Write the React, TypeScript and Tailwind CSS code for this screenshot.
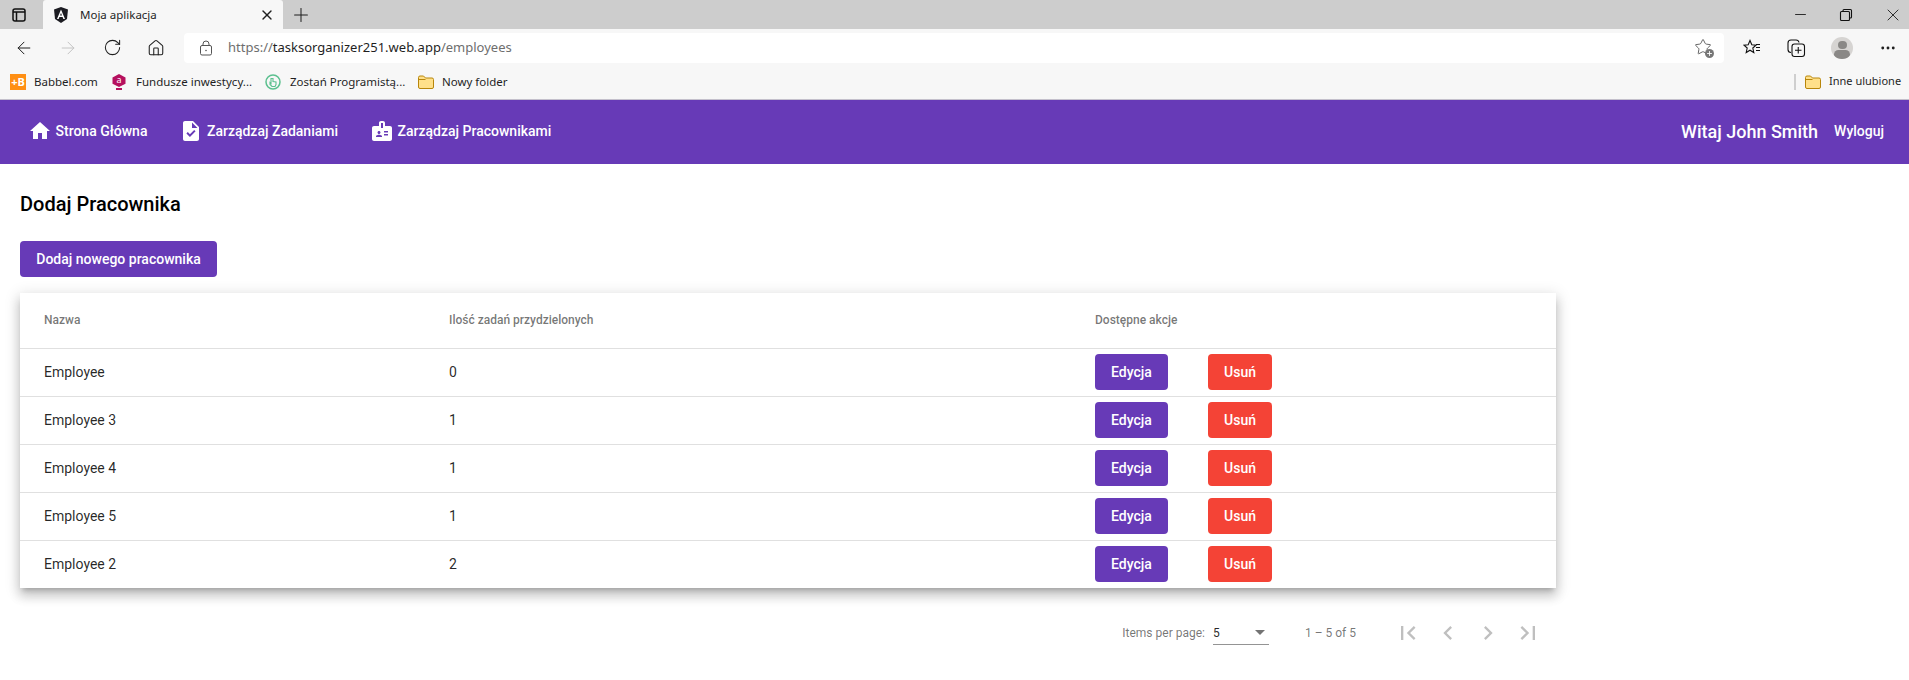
import React from 'react';
import { Plus, X, Minus, ArrowLeft, ArrowRight, RotateCw, Home, Star, MoreHorizontal } from 'lucide-react';

const employees = [
  { name: 'Employee', tasks: 0 },
  { name: 'Employee 3', tasks: 1 },
  { name: 'Employee 4', tasks: 1 },
  { name: 'Employee 5', tasks: 1 },
  { name: 'Employee 2', tasks: 2 },
];

const FolderIcon = () => (
  <svg width="16" height="16" viewBox="0 0 16 16" className="shrink-0">
    <path d="M0.5 3.5a1.5 1.5 0 0 1 1.5-1.5h3.5l2 2H14a1.5 1.5 0 0 1 1.5 1.5v7.5a1.5 1.5 0 0 1-1.5 1.5H2a1.5 1.5 0 0 1-1.5-1.5z" fill="#ffe08a" stroke="#b8860b" />
    <path d="M0.5 5.5H7.5" stroke="#b8860b" fill="none" />
  </svg>
);

const MatIcon = ({ d, className }: { d: string; className?: string }) => (
  <svg viewBox="0 0 24 24" fill="currentColor" className={className}>
    <path d={d} />
  </svg>
);

const BrowserChrome = () => (
  <div className="font-['Noto_Sans',sans-serif] text-[#1f1f1f]">
    {/* tab strip */}
    <div className="h-[29px] bg-[#cdcdcd] flex">
      <div className="w-[43px] flex items-center justify-center pr-[6px]">
        <svg width="14" height="14" viewBox="0 0 14 14" fill="none" stroke="#111" strokeWidth="1.5">
          <rect x="1" y="1" width="12" height="12" rx="2" />
          <path d="M1 4h12M4.5 4v9" />
        </svg>
      </div>
      <div className="w-[240px] bg-[#f7f7f7] rounded-t-[3px] flex items-center">
        <svg width="16" height="16" viewBox="0 0 16 16" className="ml-[10px]">
          <path d="M8 0L1 2.5l1 9.6L8 16l6-3.900 1-9.600z" fill="#1c1c22" />
          <path d="M8 2.400L4 12h1.600l.8-2.100h3.200l.8 2.100H12zM7 8.500L8 6l1 2.500z" fill="#fff" />
        </svg>
        <span className="ml-[11px] text-[11.5px] leading-none">Moja aplikacja</span>
        <X className="ml-auto mr-[8px] w-[16px] h-[16px]" strokeWidth={2} />
      </div>
      <div className="w-[36px] flex items-center justify-center">
        <Plus className="w-[22px] h-[22px]" strokeWidth={1.1} />
      </div>
      <div className="ml-auto flex items-center gap-[30px] pr-[6px]">
        <Minus className="w-[17px] h-[17px]" strokeWidth={1.3} />
        <svg width="14" height="14" viewBox="0 0 14 14" fill="none" stroke="#111" strokeWidth="1.1">
          <rect x="1.500" y="3.500" width="9" height="9" rx="1" />
          <path d="M4 3.500V2.500a1 1 0 0 1 1-1h6.500a1 1 0 0 1 1 1v6.500a1 1 0 0 1-1 1h-1" />
        </svg>
        <X className="w-[20px] h-[20px]" strokeWidth={1.1} />
      </div>
    </div>

    {/* toolbar */}
    <div className="h-[37px] bg-[#f7f7f7] flex items-center pl-[2px]">
      <div className="w-[44px] flex justify-center"><ArrowLeft className="w-[20px] h-[20px]" strokeWidth={1.2} /></div>
      <div className="w-[44px] flex justify-center"><ArrowRight className="w-[20px] h-[20px] text-[#c4c4c4]" strokeWidth={1.2} /></div>
      <div className="w-[44px] flex justify-center"><RotateCw className="w-[19px] h-[19px]" strokeWidth={1.3} /></div>
      <div className="w-[44px] flex justify-center"><Home className="w-[18px] h-[18px]" strokeWidth={1.4} /></div>
      <div className="ml-[6px] w-[1540px] h-[30px] bg-white rounded-[4px] flex items-center">
        <svg width="14" height="16" viewBox="0 0 14 16" fill="none" stroke="#555" strokeWidth="1" className="ml-[15px]">
          <rect x="1.500" y="5.500" width="11" height="9.500" rx="1.500" />
          <path d="M4 5.500V4a3 3 0 0 1 6 0v1.500" />
          <circle cx="7" cy="10.500" r="0.800" fill="#555" stroke="none" />
        </svg>
        <span className="ml-[15px] text-[13px] leading-none text-[#6e6e6e]">
          https://<span className="text-[#1f1f1f]">tasksorganizer251.web.app</span>/employees
        </span>
        <div className="ml-auto mr-[10px] relative w-[20px] h-[20px]">
          <Star className="w-[18px] h-[18px] text-[#555]" strokeWidth={1.2} />
          <span className="absolute right-0 bottom-0 w-[9px] h-[9px] rounded-full bg-[#777] flex items-center justify-center">
            <Plus className="w-[7px] h-[7px] text-white" strokeWidth={3} />
          </span>
        </div>
      </div>
      <div className="ml-[6px] w-[44px] flex justify-center">
        <svg width="18" height="18" viewBox="0 0 18 18" fill="none" stroke="#111" strokeWidth="1.1">
          <path d="M7 1.500l1.800 4.200 4.200.4-3.200 2.900 1 4.500L7 11.200 3.200 13.500l1-4.500L1 6.100l4.200-.4z" />
          <path d="M13 5.500h4M13 8.500h4M13 11.500h4" />
        </svg>
      </div>
      <div className="w-[44px] flex justify-center">
        <svg width="20" height="20" viewBox="0 0 20 20" fill="none" stroke="#111" strokeWidth="1.1">
          <path d="M5 14.500a3 3 0 0 1-3-3V5a3 3 0 0 1 3-3h5a3 3 0 0 1 3 2.500" />
          <rect x="6" y="6" width="12.500" height="12.500" rx="2.500" />
          <path d="M12.250 9v6.500M9 12.250h6.500" />
        </svg>
      </div>
      <div className="ml-[2px] w-[44px] flex justify-center">
        <div className="w-[22px] h-[22px] rounded-full bg-[#d6d4d2] flex flex-col items-center overflow-hidden">
          <div className="mt-[4px] w-[9px] h-[9px] rounded-full bg-[#8a8886]" />
          <div className="mt-[1px] w-[16px] h-[10px] rounded-full bg-[#8a8886]" />
        </div>
      </div>
      <div className="ml-[2px] w-[43px] flex justify-center"><MoreHorizontal className="w-[18px] h-[18px]" strokeWidth={1.8} /></div>
    </div>

    {/* bookmarks */}
    <div className="h-[34px] pb-[2px] bg-[#f7f7f7] border-b border-[#c4c0cc] flex items-center pl-[10px] text-[11.5px]">
      <span className="w-[16px] h-[16px] bg-[#ff8f14] text-white font-bold text-[11px] leading-[16px] text-center shrink-0">+B</span>
      <span className="ml-[8px] w-[78px]">Babbel.com</span>
      <svg width="14" height="16" viewBox="0 0 14 16" className="shrink-0">
        <path d="M7 0l6.500 3.400v6.400L7 13 .5 9.800V3.400z" fill="#b5105e" />
        <text x="7" y="9" textAnchor="middle" fontSize="9" fill="#fff">a</text>
        <rect x="4" y="14" width="6" height="2" fill="#b5105e" />
      </svg>
      <span className="ml-[10px] w-[129px]">Fundusze inwestycy...</span>
      <svg width="16" height="16" viewBox="0 0 16 16" fill="none" className="shrink-0">
        <circle cx="8" cy="8" r="7" stroke="#5cc08f" strokeWidth="1.500" />
        <path d="M6 4.500v5l-1-1v2l2 2h3l1-2v-2.500l-3-.5v-3z" stroke="#5cc08f" strokeWidth="1.100" />
      </svg>
      <span className="ml-[9px] w-[128px]">Zostań Programistą...</span>
      <FolderIcon />
      <span className="ml-[8px]">Nowy folder</span>
      <div className="ml-auto w-[2px] h-[16px] bg-[#cfcfcf]" />
      <div className="ml-[9px]"><FolderIcon /></div>
      <span className="ml-[8px] mr-[7px] w-[73px] whitespace-nowrap text-[11px]">Inne ulubione</span>
    </div>
  </div>
);

const navItems = [
  { label: 'Strona Główna', icon: 'M10 20v-6h4v6h5v-8h3L12 3 2 12h3v8z' },
  { label: 'Zarządzaj Zadaniami', icon: 'M14 2H6c-1.100 0-2 .9-2 2v16c0 1.100.9 2 2 2h12c1.100 0 2-.9 2-2V8l-6-6zm-3.060 16L7.400 14.460l1.410-1.410 2.120 2.120 4.240-4.240 1.410 1.410L10.940 18zM13 9V3.500L18.500 9H13z' },
  { label: 'Zarządzaj Pracownikami', icon: 'M20 7h-5V4c0-1.100-.9-2-2-2h-2c-1.100 0-2 .9-2 2v3H4c-1.100 0-2 .9-2 2v11c0 1.100.9 2 2 2h16c1.100 0 2-.9 2-2V9c0-1.100-.9-2-2-2zM9 12c.83 0 1.500.67 1.500 1.500S9.830 15 9 15s-1.500-.67-1.500-1.500S8.170 12 9 12zm3 6H6v-.75c0-1 2-1.500 3-1.500s3 .5 3 1.500V18zm1-9h-2V4h2v5zm5 7.500h-4V15h4v1.500zm0-3h-4V12h4v1.500z' },
];

const AppToolbar = () => (
  <div className="h-[64px] bg-[#673ab7] text-white flex items-center pl-[12px] pr-[9px] pb-[2px]">
    {navItems.map((item) => (
      <button key={item.label} className="px-4 h-9 flex items-center gap-[3.5px] text-[14px] font-medium">
        <MatIcon d={item.icon} className="w-6 h-6" />
        {item.label}
      </button>
    ))}
    <span className="ml-auto text-[18px] font-medium">Witaj John Smith</span>
    <button className="px-4 h-9 text-[14px] font-medium">Wyloguj</button>
  </div>
);

const EmployeesTable = () => (
  <div className="mt-4 bg-white shadow-[0_5px_5px_-3px_rgba(0,0,0,0.2),0_8px_10px_1px_rgba(0,0,0,0.14),0_3px_14px_2px_rgba(0,0,0,0.12)]">
    <table className="w-full table-fixed">
      <thead>
        <tr className="h-[55px] border-b border-[#e0e0e0] text-[12px] font-medium text-black/55 text-left">
          <th className="w-[429px] pl-6 font-medium">Nazwa</th>
          <th className="w-[646px] font-medium">Ilość zadań przydzielonych</th>
          <th className="font-medium">Dostępne akcje</th>
        </tr>
      </thead>
      <tbody>
        {employees.map((emp, i) => (
          <tr key={emp.name} className={`h-[48px] text-[14px] text-black/85 ${i < employees.length - 1 ? 'border-b border-[#e0e0e0]' : ''}`}>
            <td className="pl-6">{emp.name}</td>
            <td>{emp.tasks}</td>
            <td>
              <div className="flex items-center gap-[40px]">
                <button className="w-[73px] h-9 rounded-[4px] bg-[#673ab7] text-white font-medium">Edycja</button>
                <button className="w-[64px] h-9 rounded-[4px] bg-[#f44336] text-white font-medium">Usuń</button>
              </div>
            </td>
          </tr>
        ))}
      </tbody>
    </table>
  </div>
);

const pagerIcons = [
  'M18.410 16.590L13.820 12l4.590-4.590L17 6l-6 6 6 6zM6 6h2v12H6z',
  'M15.410 7.410L14 6l-6 6 6 6 1.410-1.410L10.830 12z',
  'M10 6L8.590 7.410 13.170 12l-4.580 4.590L10 18l6-6z',
  'M5.590 7.410L10.180 12l-4.590 4.590L7 18l6-6-6-6zM16 6h2v12h-2z',
];

const Paginator = () => (
  <div className="mt-[17px] h-[56px] flex items-center justify-end pr-2 text-[12px] text-black/55">
    <span>Items per page:</span>
    <div className="ml-2 w-[56px] h-[24px] border-b border-[#949494] flex items-center justify-between text-black/85">
      <span>5</span>
      <span className="mr-[4px] w-0 h-0 border-x-[5px] border-x-transparent border-t-[5px] border-t-black/55" />
    </div>
    <span className="ml-[36px]">1 – 5 of 5</span>
    <div className="ml-[32px] flex">
      {pagerIcons.map((d) => (
        <button key={d} className="w-10 h-10 flex items-center justify-center text-black/25">
          <MatIcon d={d} className="w-7 h-7" />
        </button>
      ))}
    </div>
  </div>
);

export default function App() {
  return (
    <div className="w-[1909px] h-[680px] overflow-hidden bg-white font-['Roboto',sans-serif]">
      <BrowserChrome />
      <AppToolbar />
      <main className="w-[1536px] ml-5">
        <h2 className="mt-6 text-[20px] leading-8 font-medium text-black">Dodaj Pracownika</h2>
        <button className="mt-[21px] w-[197px] h-9 rounded-[4px] bg-[#673ab7] text-white text-[14px] font-medium">
          Dodaj nowego pracownika
        </button>
        <EmployeesTable />
        <Paginator />
      </main>
    </div>
  );
}
